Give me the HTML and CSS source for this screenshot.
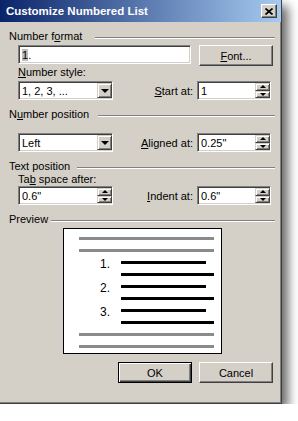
FILE: index.html
```html
<!DOCTYPE html>
<html>
<head>
    <title>Customize Numbered List</title>
    <link rel="stylesheet" href="styles.css">
</head>
<body>
    <div class="dialog">
        <div class="titlebar">
            <span class="title">Customize Numbered List</span>
            <span class="close">
                <svg width="8" height="7" viewBox="0 0 8 7"><path d="M0.5 0.5 L7.5 6.5 M7.5 0.5 L0.5 6.5" stroke="#000" stroke-width="1.7" fill="none"/></svg>
            </span>
        </div>
        <div class="content">
            <div class="group">
                <span class="group-label label-format">Number f<u>o</u>rmat</span>
                <span class="group-line"></span>
            </div>
            <div class="row-format">
                <div class="edit edit-format"><span class="selected">1</span>.</div>
                <div class="btn btn-font"><span><u>F</u>ont...</span></div>
            </div>

            <div class="field-label"><u>N</u>umber style:</div>
            <div class="row-field">
                <div class="edit combo">
                    <span class="edit-text">1, 2, 3, ...</span>
                    <span class="combo-btn"><span class="arrow-down"></span></span>
                </div>
                <span class="side-label"><u>S</u>tart at:</span>
                <div class="edit spin">
                    <span class="edit-text">1</span>
                    <span class="spin-btns">
                        <span class="spin-btn"><span class="arrow-up-small"></span></span>
                        <span class="spin-btn"><span class="arrow-down-small"></span></span>
                    </span>
                </div>
            </div>

            <div class="group">
                <span class="group-label label-position">N<u>u</u>mber position</span>
                <span class="group-line"></span>
            </div>
            <div class="row-field row-left">
                <div class="edit combo">
                    <span class="edit-text">Left</span>
                    <span class="combo-btn"><span class="arrow-down"></span></span>
                </div>
                <span class="side-label"><u>A</u>ligned at:</span>
                <div class="edit spin">
                    <span class="edit-text">0.25"</span>
                    <span class="spin-btns">
                        <span class="spin-btn"><span class="arrow-up-small"></span></span>
                        <span class="spin-btn"><span class="arrow-down-small"></span></span>
                    </span>
                </div>
            </div>

            <div class="group">
                <span class="group-label label-text">Text position</span>
                <span class="group-line"></span>
            </div>
            <div class="field-label">Ta<u>b</u> space after:</div>
            <div class="row-field row-tab">
                <div class="edit spin">
                    <span class="edit-text">0.6"</span>
                    <span class="spin-btns">
                        <span class="spin-btn"><span class="arrow-up-small"></span></span>
                        <span class="spin-btn"><span class="arrow-down-small"></span></span>
                    </span>
                </div>
                <span class="side-label"><u>I</u>ndent at:</span>
                <div class="edit spin">
                    <span class="edit-text">0.6"</span>
                    <span class="spin-btns">
                        <span class="spin-btn"><span class="arrow-up-small"></span></span>
                        <span class="spin-btn"><span class="arrow-down-small"></span></span>
                    </span>
                </div>
            </div>

            <div class="group">
                <span class="group-label label-preview">Preview</span>
                <span class="group-line"></span>
            </div>
            <div class="preview">
                <div class="bar bar-gray"></div>
                <div class="bar bar-gray"></div>
                <div class="item">
                    <span class="num">1.</span>
                    <div class="item-lines">
                        <div class="bar bar-black short"></div>
                        <div class="bar bar-black long"></div>
                    </div>
                </div>
                <div class="item">
                    <span class="num">2.</span>
                    <div class="item-lines">
                        <div class="bar bar-black short"></div>
                        <div class="bar bar-black long"></div>
                    </div>
                </div>
                <div class="item">
                    <span class="num">3.</span>
                    <div class="item-lines">
                        <div class="bar bar-black short"></div>
                        <div class="bar bar-black long"></div>
                    </div>
                </div>
                <div class="bar bar-gray"></div>
                <div class="bar bar-gray"></div>
            </div>

            <div class="buttons">
                <div class="btn btn-default"><span>OK</span></div>
                <div class="btn"><span>Cancel</span></div>
            </div>
        </div>
    </div>
</body>
</html>
```

FILE: styles.css
```css
body {
    margin: 0;
    background: #fff;
    font-family: "Liberation Sans", Arial, sans-serif;
    font-size: 11px;
    color: #000;
}

.dialog {
    width: 281px;
    height: 403px;
    background: #d4d0c8;
    border-right: 1px solid #404040;
    border-bottom: 1px solid #404040;
    box-shadow: inset -1px -1px #808080, 6px 6px 10px rgba(0, 0, 0, 0.6);
}

.titlebar {
    height: 22px;
    box-sizing: border-box;
    padding: 0 4px 0 6px;
    display: flex;
    align-items: center;
    justify-content: space-between;
    background: linear-gradient(to right, #0a246a, #a6caf0);
    color: #fff;
    font-weight: bold;
    font-size: 11.5px;
}

.close {
    width: 16px;
    height: 14px;
    box-sizing: border-box;
    display: flex;
    align-items: center;
    justify-content: center;
    background: #d4d0c8;
    border: 1px solid;
    border-color: #fff #404040 #404040 #fff;
    box-shadow: inset -1px -1px #808080;
}

.content {
    padding: 0 6px 0 9px;
}

/* group headers with etched line */
.group {
    display: flex;
    height: 13px;
    line-height: 13px;
    margin-top: 8px;
}

.group-line {
    flex: 1;
    height: 0;
    margin-top: 7px;
    border-top: 1px solid #808080;
    border-bottom: 1px solid #fff;
}

.label-format { width: 86px; }
.label-position { width: 89px; }
.label-text { width: 68px; }
.label-preview { width: 42px; }

.field-label {
    height: 13px;
    line-height: 13px;
    margin-left: 9px;
}

/* controls */
.edit {
    height: 19px;
    box-sizing: border-box;
    background: #fff;
    border: 1px solid;
    border-color: #808080 #fff #fff #808080;
    box-shadow: inset 1px 1px #404040, inset -1px -1px #d4d0c8;
    padding: 2px 2px 2px 3px;
    display: flex;
    align-items: center;
}

.edit-text {
    flex: 1;
}

.selected {
    background: #bdbdbd;
}

.btn {
    width: 74px;
    height: 21px;
    box-sizing: border-box;
    display: flex;
    align-items: center;
    justify-content: center;
    background: #d4d0c8;
    border: 1px solid;
    border-color: #fff #404040 #404040 #fff;
    box-shadow: inset -1px -1px #808080;
}

.btn-default {
    border-color: #000;
    box-shadow: inset 1px 1px #fff, inset -1px -1px #404040, inset -2px -2px #808080;
}

.row-format {
    display: flex;
    gap: 8px;
    margin-top: 2px;
    margin-left: 9px;
}

.edit-format {
    width: 173px;
}

.row-field {
    display: grid;
    grid-template-columns: 95px 1fr 74px;
    align-items: center;
    width: 253px;
    margin-top: 2px;
    margin-left: 9px;
}

.row-left {
    margin-top: 12px;
}

.row-tab {
    margin-top: 0;
}

.side-label {
    text-align: right;
    padding-right: 4px;
}

.combo-btn,
.spin-btn {
    box-sizing: border-box;
    display: flex;
    align-items: center;
    justify-content: center;
    background: #d4d0c8;
    border: 1px solid;
    border-color: #d4d0c8 #404040 #404040 #d4d0c8;
    box-shadow: inset 1px 1px #fff, inset -1px -1px #808080;
}

.combo-btn {
    width: 15px;
    height: 15px;
    margin-right: -2px;
}

.spin-btns {
    display: flex;
    flex-direction: column;
    margin-right: -2px;
}

.spin-btn {
    width: 15px;
    height: 7.5px;
}

.arrow-down {
    border-left: 4px solid transparent;
    border-right: 4px solid transparent;
    border-top: 4px solid #000;
}

.arrow-up-small {
    border-left: 3px solid transparent;
    border-right: 3px solid transparent;
    border-bottom: 3px solid #000;
}

.arrow-down-small {
    border-left: 3px solid transparent;
    border-right: 3px solid transparent;
    border-top: 3px solid #000;
}

/* preview */
.preview {
    width: 159px;
    height: 126px;
    box-sizing: border-box;
    margin: 2px 0 0 54px;
    padding: 8px 0 0 15px;
    background: #fff;
    border: 1px solid #000;
    display: flex;
    flex-direction: column;
    gap: 9px;
}

.bar {
    height: 3px;
}

.bar-gray {
    width: 135px;
    background: #8a8a8a;
}

.bar-black {
    background: #000;
}

.short { width: 85px; }
.long { width: 93px; }

.item {
    display: flex;
}

.num {
    width: 42px;
    box-sizing: border-box;
    padding-right: 11px;
    margin-top: -3px;
    text-align: right;
    font-family: Arial, "Liberation Sans", sans-serif;
    font-size: 12px;
    line-height: 12px;
}

.item-lines {
    display: flex;
    flex-direction: column;
    gap: 9px;
}

.buttons {
    display: flex;
    justify-content: flex-end;
    gap: 7px;
    margin: 8px 2px 0 0;
}
```
